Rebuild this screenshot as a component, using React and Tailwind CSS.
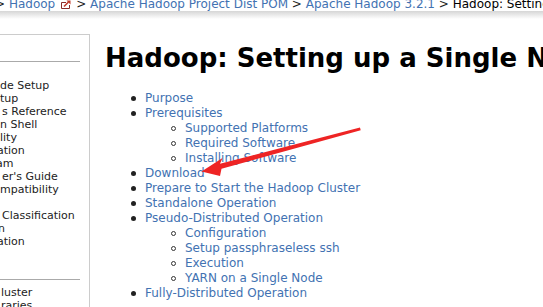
import React from "react";

const outer = [
  { t: "Purpose" },
  { t: "Prerequisites", sub: ["Supported Platforms", "Required Software", "Installing Software"] },
  { t: "Download" },
  { t: "Prepare to Start the Hadoop Cluster" },
  { t: "Standalone Operation" },
  {
    t: "Pseudo-Distributed Operation",
    sub: ["Configuration", "Setup passphraseless ssh", "Execution", "YARN on a Single Node"],
  },
  { t: "Fully-Distributed Operation" },
];

const navA = [
  ["", 0],
  ["de Setup", 0],
  ["tup", 0],
  ["s Reference", 2],
  ["n Shell", 0],
  ["lity", 0],
  ["ation", -3],
  ["am", -4],
  ["er's Guide", 2],
  ["mpatibility", 0],
  ["", 0],
  ["Classification", 2],
  ["n", -2],
  ["ation", -3],
];
const navB = [
  ["luster", 1],
  ["raries", 1],
];

function NavLine({ text, off }) {
  return (
    <div className="h-[13px] leading-[13px] whitespace-nowrap" style={{ marginLeft: off }}>
      {text}
    </div>
  );
}

function ExtIcon() {
  return (
    <svg width="11" height="10" viewBox="0 0 11 10" className="inline-block ml-[6px] mr-[4px] align-[-1px]">
      <path d="M5 3.5H0.5V9.5H8.5V6" fill="none" stroke="#8a2a2a" strokeWidth="1" />
      <path d="M3 7.5L7.5 3" fill="none" stroke="#c0392b" strokeWidth="1.6" />
      <path d="M5.5 1.5H9.5V5.5Z" fill="#c0392b" />
    </svg>
  );
}

export default function App() {
  return (
    <div className="relative w-[543px] h-[307px] overflow-hidden bg-white font-['DejaVu_Sans',sans-serif]">
      {/* breadcrumbs */}
      <div className="h-[11px] overflow-hidden text-[12px] leading-[12px] text-[#4272b2]">
        <div className="-mt-[2px] whitespace-nowrap">
          <span className="ml-[-5px] text-[#222]">&gt;</span> <span>Hadoop</span>
          <ExtIcon />
          <span className="text-[#222]">&gt;</span> <span>Apache Hadoop Project Dist POM</span>{" "}
          <span className="text-[#222]">&gt;</span> <span>Apache Hadoop 3.2.1</span>{" "}
          <span className="text-[#222]">&gt;</span>{" "}
          <span className="text-black">Hadoop: Setting up a Single Node Cluster.</span>
        </div>
      </div>
      <div className="h-[8px] bg-linear-to-b from-[#d6d6d6] to-white" />

      <div className="flex mt-[15px]">
        {/* left column */}
        <div className="w-[90px] shrink-0 h-[300px] border-t border-r border-[#cccccc] pr-[9px] text-[11px] text-[#222] overflow-hidden">
          <div className="h-[27px] border-b border-[#aaaaaa]" />
          <div className="mt-[4px]">
            {navA.map(([t, o], i) => (
              <NavLine key={i} text={t} off={o} />
            ))}
          </div>
          <div className="h-[32px] border-b border-[#aaaaaa]" />
          <div className="mt-[6px]">
            {navB.map(([t, o], i) => (
              <NavLine key={i} text={t} off={o} />
            ))}
          </div>
        </div>

        {/* main */}
        <div className="flex-1 min-w-0 pl-[15px] pt-[11px]">
          <h1 className="text-[26px] leading-[26px] font-bold text-black whitespace-nowrap">
            Hadoop: Setting up a Single Node Cluster.
          </h1>
          <ul className="mt-[20px] text-[12px] leading-[15px] text-[#4272b2] whitespace-nowrap">
            {outer.map((item) => (
              <li key={item.t} className="flex">
                <span className="w-[40px] shrink-0 h-[15px]">
                  <span className="block ml-[26px] mt-[5px] w-[5px] h-[5px] rounded-full bg-[#222]" />
                </span>
                <div>
                  <div>{item.t}</div>
                  {item.sub && (
                    <ul>
                      {item.sub.map((s) => (
                        <li key={s} className="flex">
                          <span className="w-[40px] shrink-0 h-[15px]">
                            <span className="block ml-[26px] mt-[5px] w-[5px] h-[5px] rounded-full border border-[#333]" />
                          </span>
                          <div>{s}</div>
                        </li>
                      ))}
                    </ul>
                  )}
                </div>
              </li>
            ))}
          </ul>
        </div>
      </div>

      {/* red annotation arrow */}
      <svg className="absolute left-0 top-0 pointer-events-none" width="543" height="307" viewBox="0 0 543 307">
        <polygon
          points="360,127.5 360.7,130.3 221.5,168.8 220,176 201.5,171.5 222.5,158 220,163.8"
          fill="#ee2424"
        />
      </svg>
    </div>
  );
}
